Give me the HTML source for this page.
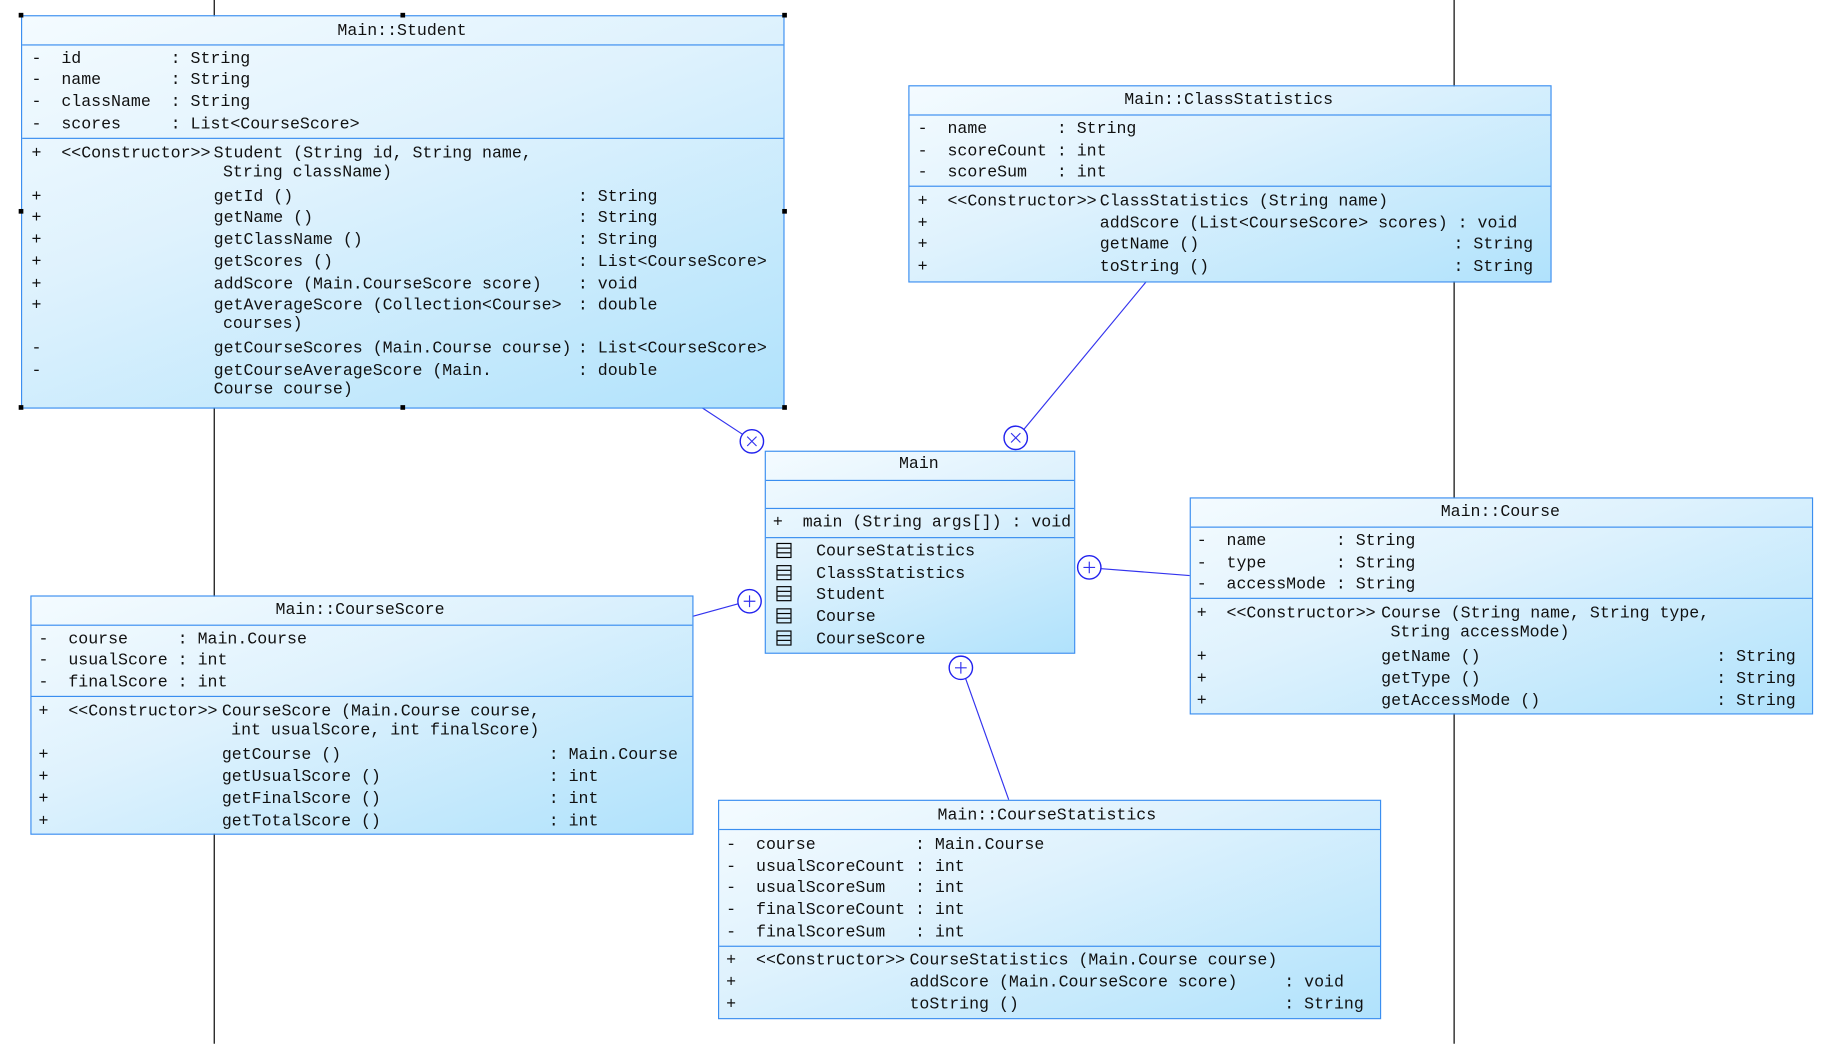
<!DOCTYPE html>
<html><head><meta charset="utf-8"><style>
html,body{margin:0;padding:0;background:#fff;overflow:hidden;width:1832px;height:1044px}
#c{position:absolute;left:0;top:0;width:1570px;height:894px;transform:scale(1.1675);transform-origin:0 0}
.b{position:absolute;border:1px solid #3a8ef0;background:linear-gradient(160deg,#f4fbff 0%,#dff2fd 40%,#b0e2fc 100%);box-sizing:border-box}
.s{position:absolute;left:0;right:0;height:0;border-top:1px solid #3a8ef0}
.t{position:absolute;white-space:pre;font:14.2px/18px "Liberation Mono","Noto Sans CJK SC",monospace;color:#111;margin-top:-7.5px}
.h{position:absolute;width:4px;height:4px;background:#000}
.ic{position:absolute;width:13px;height:13px;border:1px solid #000;box-sizing:border-box;background:linear-gradient(#000,#000) 0 3px/100% 1px no-repeat,linear-gradient(#000,#000) 0 7px/100% 1px no-repeat;margin-top:-6px}
</style></head><body><div id="c">
<div style="position:absolute;left:183px;top:0;width:1px;height:894px;background:#000"></div>
<div style="position:absolute;left:1245px;top:0;width:1px;height:894px;background:#000"></div>
<svg style="position:absolute;left:0;top:0" width="1570" height="894">
<g stroke="#3333ee" stroke-width="1" fill="none">
<line x1="601" y1="349" x2="636" y2="372"/>
<line x1="982" y1="241" x2="876" y2="369"/>
<line x1="593" y1="528" x2="633" y2="517"/>
<line x1="1019" y1="493" x2="942" y2="487"/>
<line x1="864" y1="685" x2="827" y2="581"/>
</g>
<g stroke="#2222ee" fill="#fff" stroke-width="1.2">
<circle cx="644" cy="378" r="10"/><circle cx="870" cy="375" r="10"/>
<circle cx="642" cy="515" r="10"/><circle cx="933" cy="486" r="10"/><circle cx="823" cy="572" r="10"/>
</g>
<g stroke="#3333ee" stroke-width="1">
<path d="M640 374l8 8M648 374l-8 8M866 371l8 8M874 371l-8 8"/>
<path d="M642 510v10M637 515h10M933 481v10M928 486h10M823 567v10M818 572h10"/>
</g>
</svg>

<!-- Student -->
<div class="b" style="left:18px;top:13px;width:654px;height:337px"><div class="s" style="top:24px"></div><div class="s" style="top:104px"></div></div>
<div class="h" style="left:16px;top:11px"></div><div class="h" style="left:343px;top:11px"></div><div class="h" style="left:670px;top:11px"></div>
<div class="h" style="left:16px;top:179px"></div><div class="h" style="left:670px;top:179px"></div>
<div class="h" style="left:16px;top:347px"></div><div class="h" style="left:343px;top:347px"></div><div class="h" style="left:670px;top:347px"></div>
<div class="t" style="left:289px;top:25px">Main::Student</div>
<div class="t" style="left:27px;top:49px">-  id         : String</div>
<div class="t" style="left:27px;top:67px">-  name       : String</div>
<div class="t" style="left:27px;top:86px">-  className  : String</div>
<div class="t" style="left:27px;top:105px">-  scores     : List&lt;CourseScore&gt;</div>
<div class="t" style="left:27px;top:130px">+  &lt;&lt;Constructor&gt;&gt;</div><div class="t" style="left:183px;top:130px">Student (String id, String name,</div>
<div class="t" style="left:191px;top:146px">String className)</div>
<div class="t" style="left:27px;top:167px">+</div><div class="t" style="left:183px;top:167px">getId ()</div><div class="t" style="left:495px;top:167px">: String</div>
<div class="t" style="left:27px;top:185px">+</div><div class="t" style="left:183px;top:185px">getName ()</div><div class="t" style="left:495px;top:185px">: String</div>
<div class="t" style="left:27px;top:204px">+</div><div class="t" style="left:183px;top:204px">getClassName ()</div><div class="t" style="left:495px;top:204px">: String</div>
<div class="t" style="left:27px;top:223px">+</div><div class="t" style="left:183px;top:223px">getScores ()</div><div class="t" style="left:495px;top:223px">: List&lt;CourseScore&gt;</div>
<div class="t" style="left:27px;top:242px">+</div><div class="t" style="left:183px;top:242px">addScore (Main.CourseScore score)</div><div class="t" style="left:495px;top:242px">: void</div>
<div class="t" style="left:27px;top:260px">+</div><div class="t" style="left:183px;top:260px">getAverageScore (Collection&lt;Course&gt;</div><div class="t" style="left:495px;top:260px">: double</div>
<div class="t" style="left:191px;top:276px">courses)</div>
<div class="t" style="left:27px;top:297px">-</div><div class="t" style="left:183px;top:297px">getCourseScores (Main.Course course)</div><div class="t" style="left:495px;top:297px">: List&lt;CourseScore&gt;</div>
<div class="t" style="left:27px;top:316px">-</div><div class="t" style="left:183px;top:316px">getCourseAverageScore (Main.</div><div class="t" style="left:495px;top:316px">: double</div>
<div class="t" style="left:183px;top:332px">Course course)</div>

<!-- ClassStatistics -->
<div class="b" style="left:778px;top:73px;width:551px;height:169px"><div class="s" style="top:24px"></div><div class="s" style="top:85px"></div></div>
<div class="t" style="left:963px;top:84px">Main::ClassStatistics</div>
<div class="t" style="left:786px;top:109px">-  name       : String</div>
<div class="t" style="left:786px;top:128px">-  scoreCount : int</div>
<div class="t" style="left:786px;top:146px">-  scoreSum   : int</div>
<div class="t" style="left:786px;top:171px">+  &lt;&lt;Constructor&gt;&gt;</div><div class="t" style="left:942px;top:171px">ClassStatistics (String name)</div>
<div class="t" style="left:786px;top:190px">+</div><div class="t" style="left:942px;top:190px">addScore (List&lt;CourseScore&gt; scores) : void</div>
<div class="t" style="left:786px;top:208px">+</div><div class="t" style="left:942px;top:208px">getName ()</div><div class="t" style="left:1245px;top:208px">: String</div>
<div class="t" style="left:786px;top:227px">+</div><div class="t" style="left:942px;top:227px">toString ()</div><div class="t" style="left:1245px;top:227px">: String</div>

<!-- Main -->
<div class="b" style="left:655px;top:386px;width:266px;height:174px"><div class="s" style="top:24px"></div><div class="s" style="top:48px"></div><div class="s" style="top:73px"></div></div>
<div class="t" style="left:770px;top:396px">Main</div>
<div class="t" style="left:662px;top:446px">+  main (String args[]) : void</div>
<div class="ic" style="left:665px;top:471px"></div><div class="t" style="left:699px;top:471px">CourseStatistics</div>
<div class="ic" style="left:665px;top:490px"></div><div class="t" style="left:699px;top:490px">ClassStatistics</div>
<div class="ic" style="left:665px;top:508px"></div><div class="t" style="left:699px;top:508px">Student</div>
<div class="ic" style="left:665px;top:527px"></div><div class="t" style="left:699px;top:527px">Course</div>
<div class="ic" style="left:665px;top:546px"></div><div class="t" style="left:699px;top:546px">CourseScore</div>

<!-- Course -->
<div class="b" style="left:1019px;top:426px;width:534px;height:186px"><div class="s" style="top:24px"></div><div class="s" style="top:85px"></div></div>
<div class="t" style="left:1234px;top:437px">Main::Course</div>
<div class="t" style="left:1025px;top:462px">-  name       : String</div>
<div class="t" style="left:1025px;top:481px">-  type       : String</div>
<div class="t" style="left:1025px;top:499px">-  accessMode : String</div>
<div class="t" style="left:1025px;top:524px">+  &lt;&lt;Constructor&gt;&gt;</div><div class="t" style="left:1183px;top:524px">Course (String name, String type,</div>
<div class="t" style="left:1191px;top:540px">String accessMode)</div>
<div class="t" style="left:1025px;top:561px">+</div><div class="t" style="left:1183px;top:561px">getName ()</div><div class="t" style="left:1470px;top:561px">: String</div>
<div class="t" style="left:1025px;top:580px">+</div><div class="t" style="left:1183px;top:580px">getType ()</div><div class="t" style="left:1470px;top:580px">: String</div>
<div class="t" style="left:1025px;top:599px">+</div><div class="t" style="left:1183px;top:599px">getAccessMode ()</div><div class="t" style="left:1470px;top:599px">: String</div>

<!-- CourseScore -->
<div class="b" style="left:26px;top:510px;width:568px;height:205px"><div class="s" style="top:24px"></div><div class="s" style="top:85px"></div></div>
<div class="t" style="left:236px;top:521px">Main::CourseScore</div>
<div class="t" style="left:33px;top:546px">-  course     : Main.Course</div>
<div class="t" style="left:33px;top:564px">-  usualScore : int</div>
<div class="t" style="left:33px;top:583px">-  finalScore : int</div>
<div class="t" style="left:33px;top:608px">+  &lt;&lt;Constructor&gt;&gt;</div><div class="t" style="left:190px;top:608px">CourseScore (Main.Course course,</div>
<div class="t" style="left:198px;top:624px">int usualScore, int finalScore)</div>
<div class="t" style="left:33px;top:645px">+</div><div class="t" style="left:190px;top:645px">getCourse ()</div><div class="t" style="left:470px;top:645px">: Main.Course</div>
<div class="t" style="left:33px;top:664px">+</div><div class="t" style="left:190px;top:664px">getUsualScore ()</div><div class="t" style="left:470px;top:664px">: int</div>
<div class="t" style="left:33px;top:683px">+</div><div class="t" style="left:190px;top:683px">getFinalScore ()</div><div class="t" style="left:470px;top:683px">: int</div>
<div class="t" style="left:33px;top:702px">+</div><div class="t" style="left:190px;top:702px">getTotalScore ()</div><div class="t" style="left:470px;top:702px">: int</div>

<!-- CourseStatistics -->
<div class="b" style="left:615px;top:685px;width:568px;height:188px"><div class="s" style="top:24px"></div><div class="s" style="top:124px"></div></div>
<div class="t" style="left:803px;top:697px">Main::CourseStatistics</div>
<div class="t" style="left:622px;top:722px">-  course          : Main.Course</div>
<div class="t" style="left:622px;top:741px">-  usualScoreCount : int</div>
<div class="t" style="left:622px;top:759px">-  usualScoreSum   : int</div>
<div class="t" style="left:622px;top:778px">-  finalScoreCount : int</div>
<div class="t" style="left:622px;top:797px">-  finalScoreSum   : int</div>
<div class="t" style="left:622px;top:821px">+  &lt;&lt;Constructor&gt;&gt;</div><div class="t" style="left:779px;top:821px">CourseStatistics (Main.Course course)</div>
<div class="t" style="left:622px;top:840px">+</div><div class="t" style="left:779px;top:840px">addScore (Main.CourseScore score)</div><div class="t" style="left:1100px;top:840px">: void</div>
<div class="t" style="left:622px;top:859px">+</div><div class="t" style="left:779px;top:859px">toString ()</div><div class="t" style="left:1100px;top:859px">: String</div>
</div></body></html>
